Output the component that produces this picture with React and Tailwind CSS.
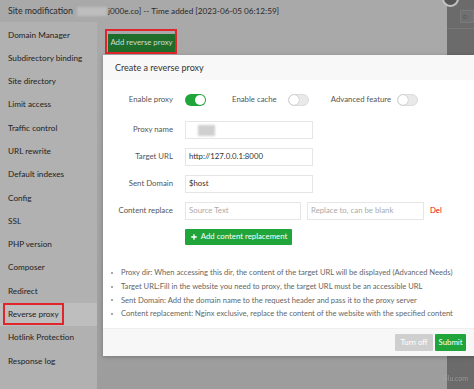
import { Plus } from 'lucide-react';

const menu = [
  'Domain Manager',
  'Subdirectory binding',
  'Site directory',
  'Limit access',
  'Traffic control',
  'URL rewrite',
  'Default indexes',
  'Config',
  'SSL',
  'PHP version',
  'Composer',
  'Redirect',
  'Reverse proxy',
  'Hotlink Protection',
  'Response log',
];

const tips = [
  'Proxy dir: When accessing this dir, the content of the target URL will be displayed (Advanced Needs)',
  'Target URL:Fill in the website you need to proxy, the target URL must be an accessible URL',
  'Sent Domain: Add the domain name to the request header and pass it to the proxy server',
  'Content replacement: Nginx exclusive, replace the content of the website with the specified content',
];

function Toggle({ on }) {
  if (on) {
    return (
      <span className="relative inline-block h-[12px] w-[21px] shrink-0 rounded-full bg-[#20a53a]">
        <span className="absolute right-[1px] top-[1px] h-[10px] w-[10px] rounded-full bg-white" />
      </span>
    );
  }
  return (
    <span className="relative inline-block h-[12px] w-[21px] shrink-0 rounded-full border border-[#dcdcdc] bg-[#e9e9e9]">
      <span className="absolute left-0 top-0 h-[10px] w-[10px] rounded-full bg-white shadow-[0_0_1px_rgba(0,0,0,0.4)]" />
    </span>
  );
}

function Row({ label, children }) {
  return (
    <div className="flex h-[18px] items-center">
      <div className="w-[70px] text-right text-[7.8px] text-[#555]">{label}</div>
      <div className="ml-[12px] flex items-center">{children}</div>
    </div>
  );
}

function Field({ value, placeholder, width = 'w-[128px]', children }) {
  return (
    <div className={`flex h-[18px] items-center border border-[#e6e6e6] bg-white px-[3px] text-[7.8px] ${width}`}>
      {children}
      {value && <span className="text-[#333]">{value}</span>}
      {placeholder && <span className="text-[#aaa]">{placeholder}</span>}
    </div>
  );
}

export default function App() {
  return (
    <div className="relative h-[389px] w-[474px] overflow-hidden font-['Lato',sans-serif]">
      <div className="flex h-full">
        {/* dimmed site modification window */}
        <div className="flex w-[451px] flex-col bg-[#a6a6a6]">
          <div className="flex h-[22px] items-center bg-[#a9a9a9] pl-[8px] text-[8.8px] text-[#2a2a2a]">
            <span>Site modification</span>
            <span className="ml-[4px] mr-[1px] inline-block h-[9px] w-[30px] bg-[#bdbdbd] blur-[1px]" />
            <span className="text-[8.2px]">j000e.co] -- Time added [2023-06-05 06:12:59]</span>
          </div>
          <div className="flex flex-1">
            <div className="w-[97px] bg-[#b1b1b1] pt-[1px]">
              {menu.map((item) =>
                item === 'Reverse proxy' ? (
                  <div key={item} className="flex h-[23.3px] items-center bg-[#bebebe]">
                    <span className="ml-[3px] border-2 border-[#e0262c] px-[3px] py-[3px] text-[8.2px] text-[#222]">
                      {item}
                    </span>
                  </div>
                ) : (
                  <div key={item} className="flex h-[23.3px] items-center pl-[8px] text-[8.2px] text-[#222]">
                    {item}
                  </div>
                ),
              )}
            </div>
            <div className="flex-1 bg-gradient-to-b from-[#a9a9a9] to-[#9d9d9d] pl-[8px] pt-[5px]">
              <div className="inline-block border-2 border-[#e0262c] pl-[1px] pt-[3px]">
                <div className="flex h-[18px] w-[67px] items-center justify-center bg-[#1f6d2b] text-[7.8px] text-[#cfdccf]">
                  Add reverse proxy
                </div>
              </div>
            </div>
          </div>
        </div>
        {/* underlying page strip */}
        <div className="flex-1 bg-[#6b6b6b] pt-[10px]">
          <div className="ml-[13px] flex h-[13px] w-[14px] items-center border border-[#7a7a7a] bg-[#707070] pl-[2px] text-[6px] text-[#555]">
            D
          </div>
          <div className="mt-[5px] h-px bg-[#777]" />
        </div>
      </div>

      {/* close button of the site window */}
      <div className="absolute left-[442px] top-[-10px] flex h-[17px] w-[17px] items-center justify-center rounded-full border-2 border-[#c4c4c4] bg-[#555]" />

      {/* watermark */}
      <div className="absolute bottom-[6px] right-[6px] text-[7px] text-[#a8a8a8] opacity-70">liilu.com</div>

      {/* reverse proxy modal */}
      <div className="absolute left-[103px] top-[55px] flex h-[301px] w-[371px] flex-col bg-white shadow-[0_1px_4px_rgba(0,0,0,0.25)]">
        <div className="flex h-[25px] items-center bg-[#f8f8f8] pl-[12px] text-[9px] text-[#333]">
          Create a reverse proxy
        </div>

        <div className="mt-[13px] flex h-[13px] items-center">
          <div className="w-[70px] text-right text-[7.8px] text-[#555]">Enable proxy</div>
          <div className="ml-[12px]">
            <Toggle on />
          </div>
          <span className="ml-[26px] text-[7.8px] text-[#555]">Enable cache</span>
          <div className="ml-[11px]">
            <Toggle />
          </div>
          <span className="ml-[22px] text-[7.8px] text-[#555]">Advanced feature</span>
          <div className="ml-[6px]">
            <Toggle />
          </div>
        </div>

        <div className="mt-[15px] flex flex-col gap-[9px]">
          <Row label="Proxy name">
            <Field>
              <span className="ml-[9px] inline-block h-[11px] w-[17px] bg-[#cfcfcf] blur-[1px]" />
            </Field>
          </Row>
          <Row label="Target URL">
            <Field value="http://127.0.0.1:8000" />
          </Row>
          <Row label="Sent Domain">
            <Field value="$host" />
          </Row>
          <Row label="Content replace">
            <Field placeholder="Source Text" width="w-[116px]" />
            <div className="ml-[6px]">
              <Field placeholder="Replace to, can be blank" width="w-[117px]" />
            </div>
            <span className="ml-[6px] text-[7.8px] text-[#ef0808]">Del</span>
          </Row>
          <div className="ml-[82px] flex h-[16px] w-[107px] items-center justify-center gap-[3px] rounded-[1px] bg-[#20a53a] text-[7.8px] text-white">
            <Plus size={8} strokeWidth={4} />
            <span>Add content replacement</span>
          </div>
        </div>

        <ul className="mt-[21px] flex flex-col">
          {tips.map((t) => (
            <li key={t} className="flex h-[13.7px] items-center text-[7.6px] text-[#666]">
              <span className="ml-[8px] inline-block h-[2px] w-[2px] rounded-full bg-[#888]" />
              <span className="ml-[8px] whitespace-nowrap">{t}</span>
            </li>
          ))}
        </ul>

        <div className="mt-auto flex h-[28px] items-center justify-end gap-[2px] border-t border-[#eee] bg-[#f7f7f7] pr-[8px]">
          <div className="flex h-[17px] w-[38px] items-center justify-center rounded-[1px] bg-[#cfcfcf] text-[7.8px] text-white">
            Turn off
          </div>
          <div className="flex h-[17px] w-[31px] items-center justify-center rounded-[1px] bg-[#20a53a] text-[7.8px] text-white">
            Submit
          </div>
        </div>
      </div>
    </div>
  );
}
